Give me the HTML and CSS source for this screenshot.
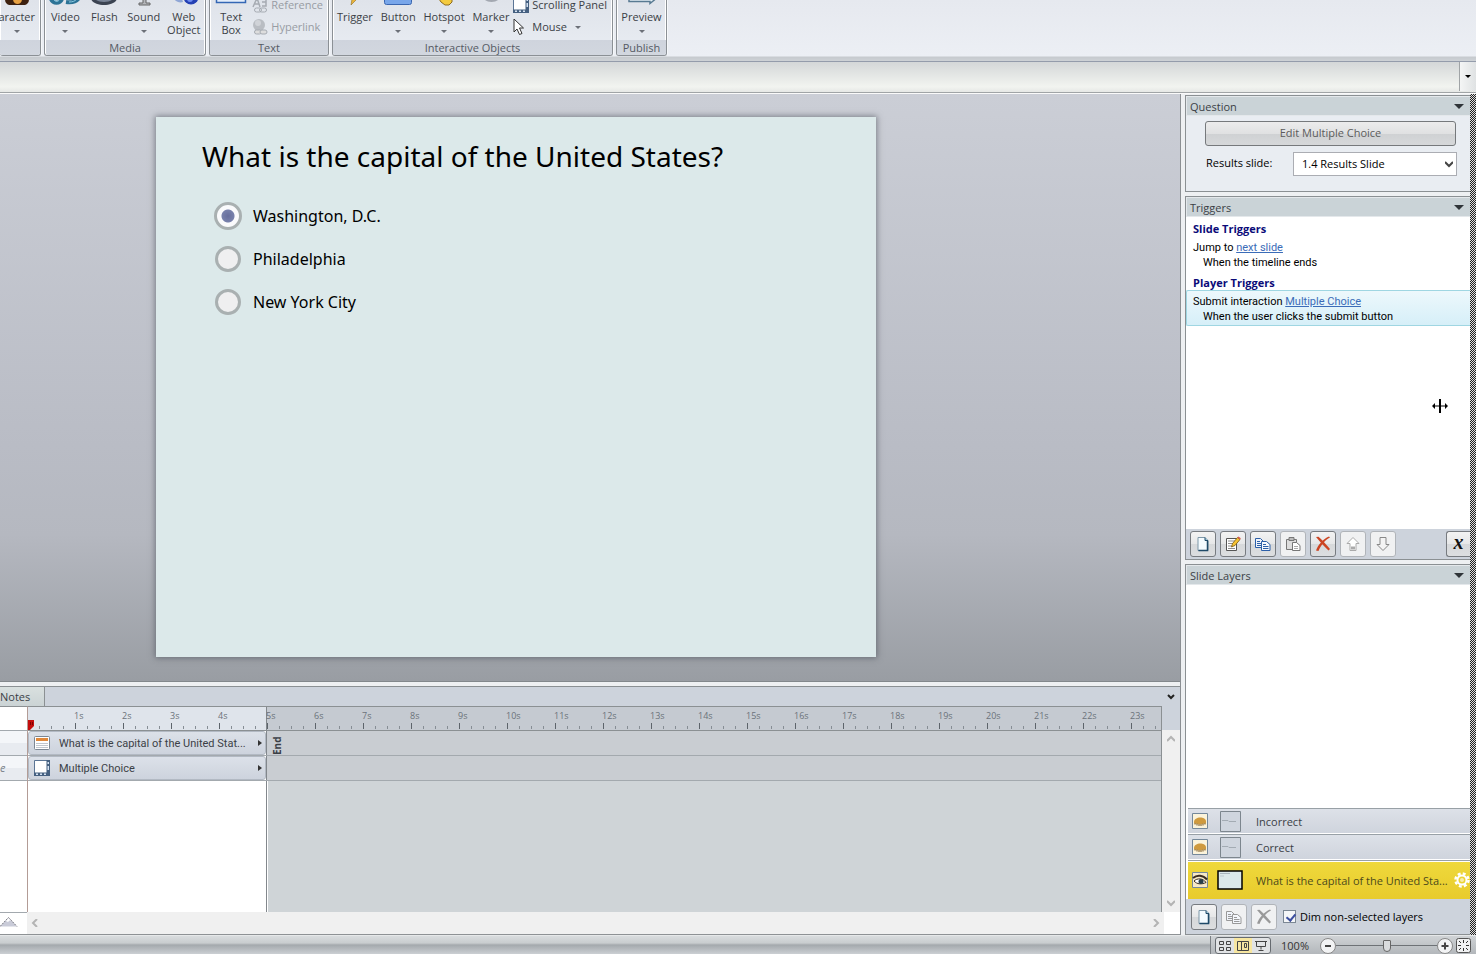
FILE: index.html
```html
<!DOCTYPE html>
<html lang="en">
<head>
    <meta charset="UTF-8">
    <meta name="viewport" content="width=device-width, initial-scale=1.0">
    <title>Course Editor</title>
    <link rel="stylesheet" href="styles.css">
</head>
<body>
    <!-- Shared icons -->
    <svg class="defs" aria-hidden="true">
        <symbol id="i-page" viewBox="0 0 16 16">
            <path d="M3 1.500h7l3 3v10h-10z" fill="#f4fbff" stroke="#7d97a8"/>
            <path d="M10 1.500v3h3" fill="#9fc4d8" stroke="#1f4a68"/>
            <path d="M12.500 5v9.500h-9" fill="none" stroke="#1f4a68" stroke-width="1.500"/>
        </symbol>
        <symbol id="i-edit" viewBox="0 0 16 16">
            <path d="M1.500 2.500h10v12h-10z" fill="#fff" stroke="#555"/>
            <path d="M3 5h7M3 7.500h7M3 10h5M3 12.500h7" stroke="#8d8d8d"/>
            <path d="M6.500 11l1-3.500 5-6 2.500 2-5 6z" fill="#f5c233" stroke="#7a5a14" stroke-width=".8"/>
            <path d="M12.500 1.500l1-1 2.300 1.800-.8 1.200z" fill="#d9534f"/>
        </symbol>
        <symbol id="i-copy" viewBox="0 0 16 16">
            <path d="M.5 2.500h5l3 3v6h-8z" fill="#f0f4fb" stroke="currentColor"/>
            <path d="M2 5.500h3M2 7.500h5M2 9.500h4" stroke="currentColor"/>
            <path d="M6.500 5.500h5l3.500 3v6h-8.500z" fill="#f4f7fc" stroke="currentColor"/>
            <path d="M8 8.500h3M8 10.500h5.500M8 12.500h5.500" stroke="currentColor"/>
        </symbol>
        <symbol id="i-paste" viewBox="0 0 16 16">
            <path d="M1.500 3.500h10v10h-10z" fill="#ddd" stroke="#777"/>
            <path d="M4 1.500h5v3h-5z" fill="#bbb" stroke="#777"/>
            <path d="M7.500 6.500h4l3.500 3v5h-7.500z" fill="#fff" stroke="#777"/>
            <path d="M9 10.500h4M9 12.500h4" stroke="#aaa"/>
        </symbol>
        <symbol id="i-delete" viewBox="0 0 16 16">
            <path d="M1 1l2.500-.3C7 4 11 8 15 13l-1.500 1.500C9 10 5 6 1 1zM15 1.500C10 4 6 9 3.500 15L1 14.500C3 9 8 3 14 .5z" fill="currentColor"/>
        </symbol>
        <symbol id="i-up" viewBox="0 0 16 16">
            <path d="M8 1.500l6 6h-3v7H5v-7H2z" fill="#fff" stroke="#aaa"/>
            <path d="M6 10.500h4v3H6z" fill="#aaa"/>
        </symbol>
        <symbol id="i-down" viewBox="0 0 16 16">
            <path d="M8 14.500l6-6h-3v-7H5v7H2z" fill="#f4f4f4" stroke="#888"/>
        </symbol>
        <symbol id="i-panel" viewBox="0 0 16 16">
            <path d="M.5 .5h15v15h-15z" fill="#fff" stroke="#5b7595"/>
            <path d="M12.500 0h3.500v16H0v-3.500h12.500z" fill="#456080"/>
            <path d="M13.500 2h1.500v2h-1.500zM13.500 6h1.500v4h-1.500zM2 13.500h2V15H2zM6 13.500h2V15H6zM10 13.500h2V15h-2z" fill="#d5e2f2"/>
        </symbol>
        <symbol id="i-closed" viewBox="0 0 16 16">
            <path d="M.5 .5h15v15h-15z" fill="#fbf3da" stroke="#74889a"/>
            <path d="M2 9c0-6 12-6 12-.5V10c-3 1.500-9 1.500-12 0z" fill="#cf9a3e"/>
            <path d="M3 10v1.500M5 10.500v2M7 11v2M9 11v2M11 10.500v2M13 10v1.500" stroke="#7a561c"/>
        </symbol>
        <symbol id="i-eye" viewBox="0 0 16 16">
            <path d="M.5 .5h15v15h-15z" fill="#f6e9c6" stroke="#74889a"/>
            <path d="M1 6C5 2.500 11 3 15 7.500" fill="none" stroke="#3a2d20" stroke-width="2"/>
            <path d="M2 9c3-3 9-3 12 1.500-4 2-9 2-12-1.500z" fill="#fff" stroke="#3a2d20"/>
            <circle cx="9" cy="9.500" r="2.500" fill="#27404a"/>
        </symbol>
        <symbol id="i-thumb" viewBox="0 0 21 21">
            <path d="M.5 .5h20v20H.5z" fill="#cfd5de" stroke="#7d868e"/>
            <path d="M2 9.500h6l1 1h7" fill="none" stroke="#a3abb3"/>
        </symbol>
    </svg>

    <header class="ribbon">
        <section class="group first">
            <div class="group-body">
                <button class="tool" type="button">
                    <svg class="tool-icon" viewBox="0 0 32 11"><path d="M4 0h24c0 3-1 5-4 6H8C5 5 4 3 4 0z" fill="#3d2110"/><path d="M12 0h9c0 3-2 5-4.500 5S12 3 12 0z" fill="#e8a243"/></svg>
                    <span>aracter</span><i class="caret"></i>
                </button>
            </div>
            <h2>&nbsp;</h2>
        </section>
        <section class="group media">
            <div class="group-body">
                <button class="tool" type="button">
                    <svg class="tool-icon" viewBox="0 0 32 11"><path d="M2 0c2 5 9 5 11 0M17 3c6 1 10 0 13-4" fill="none" stroke="#2c7396" stroke-width="4"/><path d="M5 1c2 2 4 2 6-1M20 3c4 0 6-1 8-3" fill="none" stroke="#8ccbe2"/></svg>
                    <span>Video</span><i class="caret"></i>
                </button>
                <button class="tool" type="button">
                    <svg class="tool-icon" viewBox="0 0 32 11"><path d="M3 0h26c-3 8-23 8-26 0z" fill="#3b4351"/><path d="M7 0h18c-3 4-15 4-18 0z" fill="#798496"/></svg>
                    <span>Flash</span>
                </button>
                <button class="tool" type="button">
                    <svg class="tool-icon" viewBox="0 0 32 11"><path d="M15 0h3v4h4v2H11V4h4z" fill="#b4b6ba" stroke="#666"/></svg>
                    <span>Sound</span><i class="caret"></i>
                </button>
                <button class="tool" type="button">
                    <svg class="tool-icon" viewBox="0 0 32 11"><circle cx="23" cy="-2" r="7.500" fill="#2541b4"/><circle cx="22" cy="0" r="3" fill="#6f8cf0"/><path d="M6 0c2 3 6 4 9 3l-1-3z" fill="#8fa6d6"/></svg>
                    <span>Web<br>Object</span>
                </button>
            </div>
            <h2>Media</h2>
        </section>
        <section class="group text">
            <div class="group-body">
                <button class="tool" type="button">
                    <svg class="tool-icon" viewBox="0 0 32 11"><path d="M1.500-4h29v7.500h-29z" fill="#e4eefb" stroke="#3467b5" stroke-width="1.500"/></svg>
                    <span>Text<br>Box</span>
                </button>
                <div class="tool-stack">
                    <button class="small-tool" type="button" disabled>
                        <svg viewBox="0 0 16 16"><path d="M1 10L5 1l3 9M2.500 7h4M10 2h4v7h-4M10 5h4" fill="none" stroke="#a6abb2" stroke-width="1.500"/><rect x="2.500" y="11" width="7" height="4" rx="2" fill="none" stroke="#a6abb2"/><rect x="7.500" y="11" width="7" height="4" rx="2" fill="none" stroke="#a6abb2"/></svg>
                        Reference
                    </button>
                    <button class="small-tool" type="button" disabled>
                        <svg viewBox="0 0 16 16"><circle cx="7" cy="6" r="6" fill="#b9bdc3"/><circle cx="6" cy="4" r="3" fill="#d0d3d8"/><rect x="2.500" y="11" width="7" height="4" rx="2" fill="#ddd" stroke="#a6abb2"/><rect x="8" y="11" width="7" height="4" rx="2" fill="#ddd" stroke="#a6abb2"/></svg>
                        Hyperlink
                    </button>
                </div>
            </div>
            <h2>Text</h2>
        </section>
        <section class="group objects">
            <div class="group-body">
                <button class="tool" type="button">
                    <svg class="tool-icon" viewBox="0 0 32 11"><path d="M13 0h5l-6 6z" fill="#eab53a" stroke="#8e6c20" stroke-width=".6"/></svg>
                    <span>Trigger</span>
                </button>
                <button class="tool" type="button">
                    <svg class="tool-icon" viewBox="0 0 32 11"><rect x="2.500" y="-9.500" width="27" height="15" rx="2" fill="#78a6ea" stroke="#3a66b0"/></svg>
                    <span>Button</span><i class="caret"></i>
                </button>
                <button class="tool" type="button">
                    <svg class="tool-icon" viewBox="0 0 32 11"><path d="M11 0h13v3l-3 3h-4l-4-3z" fill="#f4cb3f" stroke="#8e6c20"/></svg>
                    <span>Hotspot</span><i class="caret"></i>
                </button>
                <button class="tool" type="button">
                    <svg class="tool-icon" viewBox="0 0 32 11"><path d="M9 0h15c-3 4-12 4-15 0z" fill="#a3a8b1"/></svg>
                    <span>Marker</span><i class="caret"></i>
                </button>
                <div class="tool-stack">
                    <button class="small-tool" type="button">
                        <svg viewBox="0 0 16 16"><use href="#i-panel"/></svg>
                        Scrolling Panel
                    </button>
                    <button class="small-tool" type="button">
                        <svg viewBox="0 0 16 16"><path d="M1 0v13l3-3 2.500 5.500 2.500-1L6.500 9H10.500z" fill="#fff" stroke="#333"/></svg>
                        Mouse <i class="caret"></i>
                    </button>
                </div>
            </div>
            <h2>Interactive Objects</h2>
        </section>
        <section class="group publish">
            <div class="group-body">
                <button class="tool" type="button">
                    <svg class="tool-icon" viewBox="0 0 32 11"><path d="M3 0v2.500h21v2l5-4" fill="#e6f0f6" stroke="#587a92" stroke-width="1.500"/></svg>
                    <span>Preview</span><i class="caret"></i>
                </button>
            </div>
            <h2>Publish</h2>
        </section>
    </header>

    <div class="tab-strip">
        <button type="button" aria-label="More tabs"><i class="caret"></i></button>
    </div>

    <div class="workspace">
        <main class="editor">
            <div class="stage">
                <form class="slide">
                    <h1>What is the capital of the United States?</h1>
                    <label><input type="radio" name="capital" checked>Washington, D.C.</label>
                    <label><input type="radio" name="capital">Philadelphia</label>
                    <label><input type="radio" name="capital">New York City</label>
                </form>
            </div>

            <section class="timeline">
                <div class="timeline-tabs">
                    <button type="button">Notes</button>
                    <svg class="chevron" viewBox="0 0 8 8"><path d="M1 2l3 3 3-3" fill="none" stroke="#222" stroke-width="2"/></svg>
                </div>
                <div class="timeline-body">
                    <div class="object-names">
                        <div class="ruler-space"></div>
                        <div class="name"></div>
                        <div class="name">e</div>
                    </div>
                    <div class="tracks">
                        <div class="ruler">
                            <svg class="playhead" viewBox="0 0 6 11"><path d="M0 0h6v6l-5 5H0z" fill="#c40d0d"/><path d="M2.500 2v3M4.500 2v3" stroke="#7c0000"/></svg>
                            <span>1s</span><span>2s</span><span>3s</span><span>4s</span><span>5s</span><span>6s</span>
                            <span>7s</span><span>8s</span><span>9s</span><span>10s</span><span>11s</span><span>12s</span>
                            <span>13s</span><span>14s</span><span>15s</span><span>16s</span><span>17s</span><span>18s</span>
                            <span>19s</span><span>20s</span><span>21s</span><span>22s</span><span>23s</span>
                        </div>
                        <div class="track">
                            <div class="clip">
                                <svg viewBox="0 0 16 16"><rect x=".5" y="1.500" width="15" height="13" rx="1" fill="#fff" stroke="#7b8794"/><path d="M2 3h12v3H2z" fill="#e0883a"/><path d="M2 8.500h12M2 10.500h12M2 12.500h12" stroke="#bfc6ce"/></svg>
                                <span>What is the capital of the United Stat...</span>
                                <i class="arrow"></i>
                            </div>
                            <b class="end">End</b>
                        </div>
                        <div class="track">
                            <div class="clip">
                                <svg viewBox="0 0 16 16"><use href="#i-panel"/></svg>
                                <span>Multiple Choice</span>
                                <i class="arrow"></i>
                            </div>
                        </div>
                        <div class="track-rest"></div>
                    </div>
                    <div class="v-scroll">
                        <svg class="chevron" viewBox="0 0 8 8"><path d="M0 6l4-4 4 4" fill="none" stroke="#b4b4b4" stroke-width="2"/></svg>
                        <svg class="chevron" viewBox="0 0 8 8"><path d="M0 2l4 4 4-4" fill="none" stroke="#b4b4b4" stroke-width="2"/></svg>
                    </div>
                </div>
                <div class="timeline-foot">
                    <div class="zoom-hills"><svg viewBox="0 0 18 10"><path d="M0 9.500L8.500 .5l8.500 9z" fill="#c9cbd8"/><path d="M0 9.500L8.500 .5l8.500 9" fill="none" stroke="#77777f" stroke-dasharray="2 1"/><path d="M6 4l2.500-3L11 4 9.500 3.500 8 5z" fill="#fff"/></svg></div>
                    <div class="h-scroll">
                        <svg class="chevron" viewBox="0 0 8 8"><path d="M6 0L2 4l4 4" fill="none" stroke="#b4b4b4" stroke-width="2"/></svg>
                        <svg class="chevron" viewBox="0 0 8 8"><path d="M2 0l4 4-4 4" fill="none" stroke="#b4b4b4" stroke-width="2"/></svg>
                    </div>
                    <div class="corner"></div>
                </div>
            </section>
        </main>

        <aside class="sidebar">
            <section class="panel question">
                <h2>Question <i class="caret"></i></h2>
                <div class="question-body">
                    <button type="button">Edit Multiple Choice</button>
                    <div class="field">
                        <label for="results">Results slide:</label>
                        <div class="select-wrap">
                            <select id="results">
                                <option>1.4 Results Slide</option>
                            </select>
                            <svg class="chevron" viewBox="0 0 8 8"><path d="M0 2l4 4 4-4" fill="none" stroke="#444" stroke-width="2"/></svg>
                        </div>
                    </div>
                </div>
            </section>

            <section class="panel triggers">
                <h2>Triggers <i class="caret"></i></h2>
                <div class="trigger-list">
                    <h3>Slide Triggers</h3>
                    <div class="trigger">
                        <p>Jump to <a href="#">next slide</a></p>
                        <p class="when">When the timeline ends</p>
                    </div>
                    <h3>Player Triggers</h3>
                    <div class="trigger selected">
                        <p>Submit interaction <a href="#">Multiple Choice</a></p>
                        <p class="when">When the user clicks the submit button</p>
                    </div>
                    <svg class="resize-cursor" viewBox="0 0 16 14"><path d="M7 0h2v14H7zM0 7l3-3v2.500h10V4l3 3-3 3V7.500H3V10z"/></svg>
                </div>
                <div class="toolbar">
                    <button type="button" aria-label="New"><svg viewBox="0 0 16 16"><use href="#i-page"/></svg></button>
                    <button type="button" aria-label="Edit"><svg viewBox="0 0 16 16"><use href="#i-edit"/></svg></button>
                    <button type="button" aria-label="Copy" class="copy"><svg viewBox="0 0 16 16"><use href="#i-copy"/></svg></button>
                    <button type="button" aria-label="Paste" disabled><svg viewBox="0 0 16 16"><use href="#i-paste"/></svg></button>
                    <button type="button" aria-label="Delete" class="delete"><svg viewBox="0 0 16 16"><use href="#i-delete"/></svg></button>
                    <button type="button" aria-label="Move up" disabled><svg viewBox="0 0 16 16"><use href="#i-up"/></svg></button>
                    <button type="button" aria-label="Move down" disabled><svg viewBox="0 0 16 16"><use href="#i-down"/></svg></button>
                    <button type="button" class="variables">x</button>
                </div>
            </section>

            <section class="panel layers">
                <h2>Slide Layers <i class="caret"></i></h2>
                <div class="layer-list">
                    <div class="layer">
                        <svg class="eye" viewBox="0 0 16 16"><use href="#i-closed"/></svg>
                        <svg class="thumb" viewBox="0 0 21 21"><use href="#i-thumb"/></svg>
                        <span>Incorrect</span>
                    </div>
                    <div class="layer">
                        <svg class="eye" viewBox="0 0 16 16"><use href="#i-closed"/></svg>
                        <svg class="thumb" viewBox="0 0 21 21"><use href="#i-thumb"/></svg>
                        <span>Correct</span>
                    </div>
                    <div class="layer base">
                        <svg class="eye" viewBox="0 0 16 16"><use href="#i-eye"/></svg>
                        <svg class="thumb" viewBox="0 0 26 20"><path d="M1 1h24v18H1z" fill="#dbe9ea" stroke="#000" stroke-width="1.500"/><path d="M3 3.500h10" stroke="#a9b6bd"/><path d="M3 6h4" stroke="#bcc9ce"/></svg>
                        <span>What is the capital of the United Sta...</span>
                        <svg class="gear" viewBox="0 0 16 16"><circle cx="8" cy="8" r="6.500" fill="none" stroke="#fff" stroke-width="2.500" stroke-dasharray="2.900 2.205"/><circle cx="8" cy="8" r="4.500" fill="none" stroke="#fff" stroke-width="2"/><circle cx="8" cy="8" r="2" fill="#fff" opacity=".6"/></svg>
                    </div>
                </div>
                <div class="toolbar">
                    <button type="button" aria-label="New layer"><svg viewBox="0 0 16 16"><use href="#i-page"/></svg></button>
                    <button type="button" aria-label="Duplicate layer" disabled><svg viewBox="0 0 16 16"><use href="#i-copy"/></svg></button>
                    <button type="button" aria-label="Delete layer" disabled><svg viewBox="0 0 16 16"><use href="#i-delete"/></svg></button>
                    <label class="dim"><input type="checkbox" checked>Dim non-selected layers</label>
                </div>
            </section>
        </aside>
        <div class="hatch"></div>
    </div>

    <footer class="status-bar">
        <div class="view-tools">
            <div class="views">
                <button type="button" aria-label="Story view"><svg viewBox="0 0 12 12"><path d="M.5 1.500h4v3h-4zM7.500 1.500h4v3h-4zM.5 7.500h4v3h-4zM7.500 7.500h4v3h-4z" fill="none" stroke="#444"/></svg></button>
                <button type="button" aria-label="Slide view" class="active"><svg viewBox="0 0 12 12"><path d="M.5 1.500h11v9H.5zM4.500 1v10M7.500 3.500h2v4h-2z" fill="none" stroke="#444"/></svg></button>
                <button type="button" aria-label="Preview"><svg viewBox="0 0 12 12"><path d="M0 1.500h12M1.500 1.500v5h9v-5M6 6.500v3M3.500 10.500h5" fill="none" stroke="#444"/></svg></button>
            </div>
            <label for="zoom">100%</label>
            <button type="button" class="round" aria-label="Zoom out"><svg viewBox="0 0 16 16"><circle cx="8" cy="8" r="7.500" fill="#f2f3f4" stroke="#888"/><path d="M5 8h6" stroke="#444" stroke-width="2"/></svg></button>
            <input type="range" id="zoom" min="0" max="100" value="50">
            <button type="button" class="round" aria-label="Zoom in"><svg viewBox="0 0 16 16"><circle cx="8" cy="8" r="7.500" fill="#f2f3f4" stroke="#888"/><path d="M4.500 8h7M8 4.500v7" stroke="#444" stroke-width="2"/></svg></button>
            <button type="button" class="fit" aria-label="Fit to window"><svg viewBox="0 0 15 15"><rect x=".5" y=".5" width="14" height="14" rx="2" fill="#f0f1f2" stroke="#555"/><path d="M7.500 2v3M7.500 10v3M2 7.500h3M10 7.500h3M3 3l2 2M12 3l-2 2M3 12l2-2M12 12l-2-2" stroke="#333"/></svg></button>
        </div>
    </footer>
</body>
</html>
```
FILE: styles.css
```css
* {
    box-sizing: border-box;
}
body {
    margin: 0;
    height: 100vh;
    display: flex;
    flex-direction: column;
    overflow: hidden;
    font-family: "Open Sans", "Liberation Sans", sans-serif;
    font-size: 11px;
    color: #3b3f46;
    background: #eef0f2;
}
h1, h2, h3, p {
    margin: 0;
    font-size: 11px;
    font-weight: normal;
}
button, input, select {
    margin: 0;
    padding: 0;
    font: inherit;
    color: inherit;
}
button {
    border: none;
    background: none;
}
svg {
    display: block;
    flex: none;
}
.defs {
    position: absolute;
    width: 0;
    height: 0;
}
.caret {
    flex: none;
    width: 0;
    height: 0;
    border: 3px solid transparent;
    border-top-color: #6c7078;
    border-bottom: none;
}
.chevron {
    width: 8px;
    height: 8px;
}

/* Ribbon */
.ribbon {
    flex: none;
    display: flex;
    gap: 3px;
    height: 62px;
    padding-bottom: 6px;
    background: linear-gradient(#e6e9ef 0, #eceff4 56px, #c6cace 57px, #ced2d6 61px, #949cab 61px);
}
.group {
    display: flex;
    flex-direction: column;
    border: 1px solid #8b9095;
    border-top: none;
    border-radius: 0 0 3px 3px;
    box-shadow: inset 1px 0 #fff, inset -1px 0 #fff, 1px 0 #f6f8fa;
    background: linear-gradient(#dfe3ea, #e9edf3);
}
.group h2 {
    height: 15px;
    line-height: 15px;
    text-align: center;
    color: #555a64;
    background: linear-gradient(#cfd4dd, #d2d7df);
    border-radius: 0 0 2px 2px;
}
.group-body {
    flex: 1;
    display: flex;
}
.first {
    width: 41px;
    border-left: none;
}
.first .group-body {
    justify-content: flex-end;
    padding-right: 5px;
}
.media {
    width: 162px;
    padding: 0 1px;
}
.text {
    width: 120px;
}
.objects {
    width: 281px;
}
.publish {
    width: 51px;
}
.tool {
    flex: 1 0 auto;
    display: flex;
    flex-direction: column;
    align-items: center;
    margin-top: -1px;
    line-height: 13px;
}
.first .tool {
    flex: none;
}
.tool-icon {
    width: 32px;
    height: 11px;
}
.tool .caret {
    margin-top: 7px;
}
.tool-stack {
    display: flex;
    flex-direction: column;
    gap: 6px;
    margin-top: -3px;
    padding-right: 5px;
}
.small-tool {
    display: flex;
    align-items: center;
    gap: 3px;
    height: 16px;
    line-height: 16px;
}
.small-tool svg {
    width: 16px;
    height: 16px;
}
.small-tool .caret {
    margin-left: 5px;
}
.small-tool:disabled {
    color: #989ca4;
}

/* Strip under the ribbon */
.tab-strip {
    flex: none;
    display: flex;
    justify-content: flex-end;
    height: 32px;
    border-bottom: 1px solid #fafafa;
    box-shadow: inset 0 -1px #a0a4a6;
    background: linear-gradient(#d4d7d8, #f2f4f0 80%, #e3e5e3);
}
.tab-strip button {
    width: 17px;
    height: 29px;
    padding-left: 5px;
    border-left: 1px solid #a0a4a6;
    background: linear-gradient(90deg, #f4f5f5, #dfe2e3);
}
.tab-strip .caret {
    display: block;
    border-top-color: #000;
}

.workspace {
    flex: 1;
    min-height: 0;
    display: flex;
}
.editor {
    flex: 1;
    min-width: 0;
    display: flex;
    flex-direction: column;
    gap: 4px;
    border-right: 1px solid #8b8f93;
}

/* Slide stage */
.stage {
    flex: 1;
    min-height: 0;
    padding: 23px 156px;
    border-bottom: 1px solid #83888c;
    background: linear-gradient(#cbced6, #b9bcc5 60%, #b5b8c0 75%, #999da3);
}
.slide {
    display: flex;
    flex-direction: column;
    align-items: flex-start;
    width: 720px;
    height: 540px;
    padding: 20px 46px;
    font-family: "Noto Sans", "Open Sans", sans-serif;
    color: #000;
    background: #dce9ea;
    box-shadow: 0 0 6px 1px rgba(70, 75, 85, 0.6);
}
.slide h1 {
    margin-bottom: 19px;
    font-size: 28px;
    line-height: 38px;
    white-space: nowrap;
}
.slide label {
    display: flex;
    align-items: center;
    height: 43px;
    padding-left: 12px;
    gap: 11px;
    font-size: 16px;
}
.slide input {
    appearance: none;
    width: 26px;
    height: 26px;
    margin: 1px;
    border: 3px solid #a9b0b1;
    border-radius: 50%;
    background: #efeff0;
}
.slide input:checked {
    width: 28px;
    height: 28px;
    margin: 0;
    background: radial-gradient(circle, #666d9c 0, #7780ab 6px, #fafafc 7px);
}

/* Timeline */
.timeline {
    flex: none;
    height: 249px;
    display: flex;
    flex-direction: column;
    border-top: 1px solid #8b9093;
    border-bottom: 1px solid #8e9295;
}
.timeline-tabs {
    flex: none;
    display: flex;
    justify-content: space-between;
    align-items: center;
    height: 19px;
    padding-right: 5px;
    background: #cdd3dc;
}
.timeline-tabs button {
    align-self: stretch;
    width: 45px;
    text-align: left;
    border-right: 1px solid #8b9093;
    background: linear-gradient(#d9e0df, #cbd3d5);
}
.timeline-body {
    flex: 1;
    display: flex;
    background: #cdd3dc;
}
.object-names {
    width: 27px;
    border-top: 1px solid #8b9093;
    background: #fff;
}
.ruler-space {
    height: 24px;
    border-bottom: 1px solid #a3a9ae;
}
.name {
    height: 25px;
    line-height: 24px;
    font-style: italic;
    color: #7c828a;
    border-bottom: 1px solid #a3a9ae;
    background: linear-gradient(#f4f6f9 50%, #e8ebf0 50%);
}
.tracks {
    flex: 1;
    min-width: 0;
    display: flex;
    flex-direction: column;
    border-top: 1px solid #8b9093;
    border-left: 1px solid #b39c96;
    border-right: 1px solid #8b9093;
    background: linear-gradient(90deg, #fff 238px, #82878c 238px, #82878c 239px, #fff 239px, #fff 240px, #cfd4d7 240px);
}
.ruler {
    position: relative;
    display: flex;
    height: 24px;
    padding-left: 46px;
    overflow: hidden;
    font-size: 9px;
    line-height: 17px;
    color: #6b727a;
    border-bottom: 1px solid #8b9093;
    background:
        repeating-linear-gradient(90deg, transparent 0 47px, #5d646b 47px 48px) 0 16px / 100% 6px no-repeat,
        repeating-linear-gradient(90deg, transparent 0 11px, #868d94 11px 12px) 0 19px / 100% 3px no-repeat,
        linear-gradient(90deg, #dfe4eb 238px, #82878c 238px 239px, #c5cad1 239px);
}
.ruler span {
    flex: none;
    width: 48px;
}
.playhead {
    position: absolute;
    left: 0;
    top: 13px;
    width: 6px;
    height: 11px;
}
.track {
    display: flex;
    height: 25px;
    border-bottom: 1px solid #a3a9ae;
    background: linear-gradient(90deg, #fff 238px, #82878c 238px 239px, #c9cdd2 239px);
}
.track-rest {
    flex: 1;
}
.clip {
    display: flex;
    align-items: center;
    width: 238px;
    height: 24px;
    padding: 0 3px 0 5px;
    border: 1px solid #b2b9c3;
    border-radius: 3px;
    font-family: Roboto, "Open Sans", sans-serif;
    background: linear-gradient(#dce1e9, #cdd3dd);
}
.clip svg {
    width: 16px;
    height: 16px;
    margin-right: 9px;
}
.clip span {
    flex: 1;
    white-space: nowrap;
}
.arrow {
    border: 3px solid transparent;
    border-left: 4px solid #333;
    border-right: none;
}
.end {
    margin: 2px 0 0 4px;
    writing-mode: vertical-rl;
    transform: rotate(180deg);
    font-size: 10px;
    line-height: 14px;
}
.v-scroll {
    display: flex;
    flex-direction: column;
    justify-content: space-between;
    align-items: center;
    width: 18px;
    margin-top: 24px;
    padding: 5px 0;
    background: #f0f0f0;
}
.timeline-foot {
    flex: none;
    display: flex;
    height: 22px;
    background: #fff;
}
.zoom-hills {
    width: 27px;
    padding-top: 4px;
    border-top: 1px solid #a3a9ae;
}
.zoom-hills svg {
    width: 18px;
    height: 10px;
}
.h-scroll {
    flex: 1;
    display: flex;
    justify-content: space-between;
    align-items: center;
    padding: 0 4px;
    background: #f0f0f0;
}
.corner {
    width: 16px;
}

/* Sidebar */
.sidebar {
    width: 285px;
    display: flex;
    flex-direction: column;
    gap: 4px;
    margin-left: 4px;
    padding-top: 1px;
}
.panel {
    display: flex;
    flex-direction: column;
    border: 1px solid #8b9093;
    border-right: none;
}
.panel h2 {
    flex: none;
    display: flex;
    align-items: center;
    justify-content: space-between;
    height: 20px;
    padding: 0 6px 0 3px;
    border: 1px solid #e4e8eb;
    border-right: none;
    background: #cad3d7;
}
.panel h2 .caret {
    border-width: 5px 5px 0;
    border-top-color: #2f3438;
}
.question {
    height: 97px;
    background: #e9edf2;
}
.question-body {
    padding: 5px 14px 0 19px;
    color: #000;
}
.question-body button {
    width: 100%;
    height: 25px;
    padding-bottom: 2px;
    color: #5b5b5b;
    border: 1px solid #76797c;
    border-radius: 3px;
    background: linear-gradient(#ececec, #e0e1e2 50%, #cfd1d3 50%, #d6d8da);
}
.field {
    display: flex;
    justify-content: space-between;
    margin: 6px -1px 0 1px;
    line-height: 22px;
}
.select-wrap {
    position: relative;
    width: 164px;
}
.select-wrap select {
    appearance: none;
    width: 100%;
    height: 24px;
    padding-left: 8px;
    border: 1px solid #abadb3;
    border-radius: 0;
    background: #fff;
}
.select-wrap .chevron {
    position: absolute;
    right: 4px;
    top: 8px;
    pointer-events: none;
}
.triggers {
    height: 364px;
}
.trigger-list {
    position: relative;
    flex: 1;
    padding-top: 3px;
    font-family: Roboto, "Open Sans", sans-serif;
    line-height: 15px;
    color: #000;
    background: #fff;
}
.trigger-list h3 {
    padding-left: 7px;
    font-family: "Open Sans", sans-serif;
    font-weight: bold;
    line-height: 17px;
    color: #0b0b78;
}
.trigger {
    padding: 2px 0 3px 6px;
    border: 1px solid transparent;
    border-right: none;
}
.trigger p {
    white-space: nowrap;
}
.trigger .when {
    padding-left: 10px;
}
.trigger.selected {
    margin-top: -1px;
    padding: 3px 0 1px 6px;
    border-color: #9fd6e2;
    background: linear-gradient(#edf8fc, #d6eff8);
    border-radius: 2px 0 0 2px;
}
.trigger a {
    color: #3b6cb8;
}
.resize-cursor {
    position: absolute;
    right: 22px;
    top: 182px;
    width: 16px;
    height: 14px;
}
.toolbar {
    flex: none;
    display: flex;
    align-items: center;
    gap: 4px;
    padding-left: 4px;
    height: 30px;
    background: #cdd3dc;
}
.toolbar button {
    display: flex;
    align-items: center;
    justify-content: center;
    width: 26px;
    height: 26px;
    border: 1px solid #777b80;
    border-radius: 3px;
    color: #666;
    background: linear-gradient(#f3f3f3, #e6e7e8 50%, #d6d8da 50%, #dcdee0);
}
.toolbar button:disabled {
    border-color: #b0b4b9;
    color: #999;
    background: #f0f1f2;
}
.toolbar svg {
    width: 16px;
    height: 16px;
}
.toolbar .copy {
    color: #2c5fa8;
}
.toolbar .delete {
    color: #cc4422;
}
.toolbar .variables {
    margin-left: auto;
    width: 24px;
    padding-bottom: 3px;
    border-right: none;
    border-radius: 3px 0 0 3px;
    font: italic bold 20px "Liberation Serif", serif;
    color: #111;
}
.layers {
    flex: 1;
    min-height: 0;
}
.layer-list {
    flex: 1;
    display: flex;
    flex-direction: column;
    justify-content: flex-end;
    padding-left: 2px;
    background: #fff;
}
.layer {
    display: flex;
    align-items: center;
    height: 26px;
    padding-left: 4px;
    border-top: 1px solid #98a0a6;
    border-bottom: 1px solid #fff;
    background: linear-gradient(#dde1e8, #cfd4dd);
}
.layer .eye {
    width: 16px;
    height: 16px;
    margin-right: 12px;
}
.layer .thumb {
    width: 21px;
    height: 21px;
    margin-right: 15px;
}
.layer.base {
    height: 39px;
    color: #4c4a1c;
    border-bottom: none;
    box-shadow: inset 0 1px #fff;
    background: linear-gradient(#efd93c, #e8cb2c);
}
.layer.base .eye {
    margin-right: 9px;
}
.layer.base .thumb {
    width: 26px;
    height: 20px;
    margin-right: 13px;
}
.layer span {
    flex: 1;
    white-space: nowrap;
}
.gear {
    width: 16px;
    height: 16px;
}
.layers .toolbar {
    height: 35px;
    padding-left: 5px;
}
.dim {
    display: flex;
    align-items: center;
    gap: 4px;
    margin-left: 2px;
    color: #000;
}
.dim input {
    appearance: none;
    display: flex;
    width: 13px;
    height: 13px;
    border: 1px solid #7b8794;
    background: #f4f6f8;
}
.dim input:checked::before {
    content: "";
    width: 4px;
    height: 7px;
    margin: 1px 0 0 4px;
    border: solid #3c4fa0;
    border-width: 0 2px 2px 0;
    transform: rotate(40deg);
}
.hatch {
    width: 6px;
    background: conic-gradient(#222 25%, #ddd 0 50%, #222 0 75%, #ddd 0) 0 0 / 2px 2px;
}

/* Status bar */
.status-bar {
    flex: none;
    display: flex;
    justify-content: flex-end;
    height: 19px;
    border-top: 1px solid #e6e8e9;
    background: linear-gradient(#d9dcde, #c9cdcf 7px, #a4a9ad 9px, #cbcfd3);
}
.view-tools {
    display: flex;
    align-items: center;
    padding: 1px 5px 0 4px;
    border-left: 1px solid #7c8185;
    background: linear-gradient(#cfd2d5, #b3b7bb);
    color: #333;
}
.views {
    display: flex;
    height: 17px;
    margin-right: 10px;
    border: 1px solid #666b70;
    border-radius: 3px;
    background: #e1e3e5;
}
.views button {
    display: flex;
    align-items: center;
    width: 18px;
    padding: 0 3px;
}
.views .active {
    background: #f7e6a0;
}
.views svg {
    width: 12px;
    height: 12px;
}
.round {
    margin-left: 11px;
}
.round svg {
    width: 16px;
    height: 16px;
}
.view-tools input {
    appearance: none;
    width: 101px;
    height: 12px;
    background: linear-gradient(#6e7276, #6e7276) 0 50% / 100% 1px no-repeat;
}
.view-tools input::-webkit-slider-thumb {
    appearance: none;
    width: 8px;
    height: 12px;
    border: 1px solid #666;
    border-radius: 1px 1px 4px 4px;
    background: #dadcde;
}
.view-tools input + .round {
    margin-left: 0;
    margin-right: 3px;
}
.fit svg {
    width: 15px;
    height: 15px;
}
```
